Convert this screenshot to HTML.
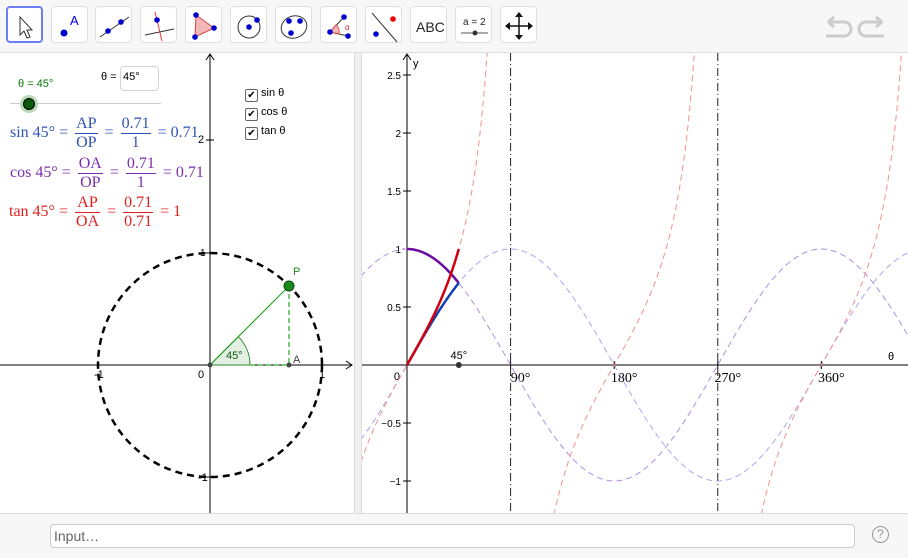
<!DOCTYPE html>
<html><head><meta charset="utf-8"><style>
html,body{margin:0;width:908px;height:558px;overflow:hidden}
body{background:#fff;font-family:"Liberation Sans",sans-serif;position:relative}
.tb{position:absolute;left:0;top:0;width:908px;height:53px;background:#f7f7f7;border-bottom:1px solid #ddd;box-sizing:border-box}
.btn{position:absolute;top:6px;width:37px;height:37px;background:#fff;border:1px solid #e0e0e0;border-radius:4px;box-sizing:border-box}
.btn svg{position:absolute;left:0;top:0}
.sel{border:2px solid #6d7ff5}
.ser{font-family:"Liberation Serif",serif;position:absolute;font-size:16px;white-space:nowrap}
.fr{display:inline-block;vertical-align:middle;text-align:center;margin:0 3px}
.fr span{display:block;line-height:18px;padding:0 1px}
.fr span:first-child{border-bottom:1px solid currentColor}
.t{position:absolute;font-size:11px;white-space:nowrap}
.bot{position:absolute;left:0;top:513px;width:908px;height:45px;background:#f7f7f7;border-top:1px solid #ddd;box-sizing:border-box}
</style></head><body>
<div class="tb">
<div class="btn sel" style="left:6px"><svg width="37" height="37"><path d="M12 9 L12 27 L16 23 L19 30 L22 29 L19 22 L24 22 Z" fill="#fff" stroke="#333" stroke-width="1"/></svg></div>
<div class="btn" style="left:51px"><svg width="37" height="37"><circle cx="12" cy="26" r="3.5" fill="#00c"/><text x="18" y="18" font-size="13" fill="#00f" font-family="Liberation Sans">A</text></svg></div>
<div class="btn" style="left:95px"><svg width="37" height="37"><line x1="4" y1="30" x2="33" y2="10" stroke="#333"/><circle cx="12" cy="24" r="2.8" fill="#00c"/><circle cx="25" cy="15" r="2.8" fill="#00c"/></svg></div>
<div class="btn" style="left:140px"><svg width="37" height="37"><line x1="4" y1="28" x2="33" y2="22" stroke="#333"/><line x1="14" y1="5" x2="21" y2="34" stroke="#e33"/><circle cx="16" cy="13" r="2.8" fill="#00c"/></svg></div>
<div class="btn" style="left:185px"><svg width="37" height="37"><path d="M10 8 L28 21 L9 30 Z" fill="#f2b8b8" stroke="#d44"/><circle cx="10" cy="8" r="2.8" fill="#00c"/><circle cx="28" cy="21" r="2.8" fill="#00c"/><circle cx="9" cy="30" r="2.8" fill="#00c"/></svg></div>
<div class="btn" style="left:230px"><svg width="37" height="37"><circle cx="18" cy="20" r="11" fill="none" stroke="#333"/><circle cx="18" cy="20" r="2.8" fill="#00c"/><circle cx="26" cy="13" r="2.8" fill="#00c"/></svg></div>
<div class="btn" style="left:275px"><svg width="37" height="37"><ellipse cx="18" cy="20" rx="13" ry="11" fill="none" stroke="#333" transform="rotate(-20 18 20)"/><circle cx="13" cy="14" r="2.8" fill="#00c"/><circle cx="24" cy="14" r="2.8" fill="#00c"/><circle cx="15" cy="26" r="2.8" fill="#00c"/></svg></div>
<div class="btn" style="left:320px"><svg width="37" height="37"><path d="M9 25 L23 10 M9 25 L27 29" stroke="#333" fill="none"/><path d="M9 25 L15 18 A9 9 0 0 1 18 27 Z" fill="#f2b8b8" stroke="#d44"/><circle cx="9" cy="25" r="2.8" fill="#00c"/><circle cx="23" cy="10" r="2.8" fill="#00c"/><circle cx="27" cy="29" r="2.8" fill="#00c"/><text x="24" y="23" font-size="8" fill="#d22">α</text></svg></div>
<div class="btn" style="left:365px"><svg width="37" height="37"><line x1="6" y1="6" x2="31" y2="35" stroke="#333"/><circle cx="10" cy="27" r="2.8" fill="#00c"/><circle cx="27" cy="12" r="2.8" fill="#e00"/></svg></div>
<div class="btn" style="left:410px"><svg width="37" height="37"><text x="5" y="25" font-size="14" fill="#222" font-family="Liberation Sans">ABC</text></svg></div>
<div class="btn" style="left:455px"><svg width="37" height="37"><text x="7" y="18" font-size="10" fill="#222" font-family="Liberation Sans">a = 2</text><line x1="5" y1="26" x2="32" y2="26" stroke="#555"/><circle cx="19" cy="26" r="2.5" fill="#333"/></svg></div>
<div class="btn" style="left:500px"><svg width="37" height="37"><path d="M18 7 V31 M6 19 H30" stroke="#111" stroke-width="1.5"/><path d="M18 5 L14 10 H22Z M18 33 L14 28 H22Z M4 19 L9 15 V23Z M32 19 L27 15 V23Z" fill="#111"/></svg></div>
<svg style="position:absolute;left:820px;top:12px" width="70" height="30"><path d="M8 10 H24 A7 7 0 0 1 24 24 H6 M8 10 L14 5 M8 10 L14 15" stroke="#ccc" stroke-width="3" fill="none"/><path d="M62 10 H46 A7 7 0 0 0 46 24 H64 M62 10 L56 5 M62 10 L56 15" stroke="#ccc" stroke-width="3" fill="none"/></svg>
</div>

<svg id="L" style="position:absolute;left:0;top:53px" width="354" height="460">
<g transform="translate(0,-53)">
<line x1="0" y1="365" x2="352" y2="365" stroke="#000"/><path d="M346 361 L352 365 L346 369" fill="none" stroke="#000"/>
<line x1="210" y1="513" x2="210" y2="55" stroke="#000"/><path d="M206 60 L210 54 L214 60" fill="none" stroke="#000"/>
<line x1="322" y1="361" x2="322" y2="369" stroke="#000"/><line x1="98" y1="361" x2="98" y2="369" stroke="#000"/>
<line x1="206" y1="253" x2="214" y2="253" stroke="#000"/><line x1="206" y1="477" x2="214" y2="477" stroke="#000"/><line x1="206" y1="140" x2="214" y2="140" stroke="#000"/>
<text x="198" y="143" font-size="11">2</text><text x="200" y="256" font-size="10">1</text><text x="94" y="378" font-size="11">-1</text><text x="198" y="378" font-size="11">0</text><text x="319" y="378" font-size="11">1</text><text x="198" y="481" font-size="11">-1</text>
<circle cx="210" cy="365" r="112" fill="none" stroke="#000" stroke-width="2.5" stroke-dasharray="7,5"/>
<path d="M210 365 L250 365 A40 40 0 0 0 238.3 336.7 Z" fill="#e3efe3" stroke="#2a8a2a"/>
<line x1="210" y1="365" x2="289" y2="286" stroke="#1a9a1a"/>
<line x1="289" y1="286" x2="289" y2="365" stroke="#7ad07a" stroke-width="2" stroke-dasharray="5,3"/>
<line x1="250" y1="365" x2="289" y2="365" stroke="#7ad07a" stroke-width="2" stroke-dasharray="5,3"/>
<circle cx="289" cy="286" r="5" fill="#1a8a1a" stroke="#0a4a0a"/>
<circle cx="289" cy="365" r="2.5" fill="#444"/><circle cx="210" cy="365" r="2.5" fill="#444"/>
<text x="226" y="359" font-size="11" fill="#0a5a0a">45°</text>
<text x="293" y="275" font-size="11" fill="#1a8a1a">P</text><text x="293" y="363" font-size="11" fill="#444">A</text>
</g></svg>

<div class="t" style="left:18px;top:78px;color:#0a7a0a">θ = 45°</div>
<div style="position:absolute;left:10px;top:103px;width:151px;height:1px;background:#ccc"></div>
<div style="position:absolute;left:20px;top:95px;width:18px;height:18px;border-radius:50%;background:#b9d9b9"></div>
<div style="position:absolute;left:23px;top:98px;width:12px;height:12px;border-radius:50%;background:#0a5a0a;box-sizing:border-box;border:1px solid #000"></div>
<div class="t" style="left:101px;top:71px">θ =</div>
<div style="position:absolute;left:120px;top:66px;width:39px;height:25px;border:1px solid #d4d4d4;border-radius:4px;box-sizing:border-box;font-size:11px;padding:4px 2px;background:#fff">45°</div>

<div class="ser" style="left:10px;top:115px;color:#2f52b8">sin 45° = <span class="fr"><span>AP</span><span>OP</span></span> = <span class="fr"><span>0.71</span><span>1</span></span> = 0.71</div>
<div class="ser" style="left:10px;top:155px;color:#7b2fb0">cos 45° = <span class="fr"><span>OA</span><span>OP</span></span> = <span class="fr"><span>0.71</span><span>1</span></span> = 0.71</div>
<div class="ser" style="left:9px;top:194px;color:#e02020">tan 45° = <span class="fr"><span>AP</span><span>OA</span></span> = <span class="fr"><span>0.71</span><span>0.71</span></span> = 1</div>

<div style="position:absolute;left:245px;top:84px;font-size:11px;line-height:19px">
<div><span style="display:inline-block;width:11px;height:11px;border:1.5px solid #666;border-radius:2px;vertical-align:-2px;font-size:10px;line-height:11px;text-align:center">✔</span> sin θ</div>
<div><span style="display:inline-block;width:11px;height:11px;border:1.5px solid #666;border-radius:2px;vertical-align:-2px;font-size:10px;line-height:11px;text-align:center">✔</span> cos θ</div>
<div><span style="display:inline-block;width:11px;height:11px;border:1.5px solid #666;border-radius:2px;vertical-align:-2px;font-size:10px;line-height:11px;text-align:center">✔</span> tan θ</div>
</div>

<div style="position:absolute;left:354px;top:53px;width:8px;height:460px;background:#f0f0f0;border-left:1px solid #ddd;border-right:1px solid #ddd;box-sizing:border-box"></div>

<svg id="R" style="position:absolute;left:362px;top:53px" width="546" height="460">
<g id="G" transform="translate(-362,-53)">
<line x1="362" y1="365" x2="908" y2="365" stroke="#000"/>
<line x1="407" y1="513" x2="407" y2="55" stroke="#000"/><path d="M403 60 L407 54 L411 60" fill="none" stroke="#000"/>
<text x="413" y="67" font-size="11">y</text><text x="888" y="360" font-size="11">θ</text>
<text x="400" y="380" font-size="11" text-anchor="end">0</text>
</g></svg>

<div class="bot">
<div style="position:absolute;left:50px;top:10px;width:805px;height:24px;background:#fff;border:1px solid #ccc;border-radius:4px;box-sizing:border-box;font-size:14px;color:#666;padding:3px 3px">Input…</div>
<div style="position:absolute;left:872px;top:12px;width:17px;height:17px;border:1.5px solid #999;border-radius:50%;box-sizing:border-box;font-size:12px;color:#999;text-align:center;line-height:15px">?</div>
</div>

<script>
var g=document.getElementById('G'),NS='http://www.w3.org/2000/svg';
function el(t,a,txt){var e=document.createElementNS(NS,t);for(var k in a)e.setAttribute(k,a[k]);if(txt)e.textContent=txt;g.appendChild(e);return e;}
var ox=407,oy=365,sx=1.151,sy=116;
function X(d){return ox+d*sx}function Y(v){return oy-v*sy}
function path(f,a,b){var d='',pen=false;for(var t=a;t<=b;t+=0.5){var v=f(t);if(!isFinite(v)||Math.abs(v)>4){pen=false;continue;}d+=(pen?'L':'M')+X(t).toFixed(1)+' '+Y(v).toFixed(1);pen=true;}return d;}
var r=Math.PI/180;
[-0.5,-1,0.5,1,1.5,2,2.5].forEach(function(v){el('line',{x1:403,y1:Y(v),x2:411,y2:Y(v),stroke:'#000'});el('text',{x:401,y:Y(v)+4,'font-size':10,'text-anchor':'end'},String(v).replace('-','−'));});
[90,180,270,360].forEach(function(d){el('line',{x1:X(d),y1:361,x2:X(d),y2:369,stroke:'#000'});el('text',{x:X(d)+10,y:382,'font-size':14,'text-anchor':'middle','font-family':'Liberation Serif'},d+'°');});
[90,270].forEach(function(d){el('line',{x1:X(d),y1:53,x2:X(d),y2:513,stroke:'#222','stroke-dasharray':'8,3,1,3'});});
el('path',{d:path(function(t){return Math.sin(t*r)},-40,440),fill:'none',stroke:'#a8a8ee','stroke-dasharray':'6,4'});
el('path',{d:path(function(t){return Math.cos(t*r)},-40,440),fill:'none',stroke:'#b08ee0','stroke-dasharray':'6,4'});
el('path',{d:path(function(t){return Math.tan(t*r)},-40,440),fill:'none',stroke:'#f29090','stroke-dasharray':'6,4'});
el('path',{d:path(function(t){return Math.cos(t*r)},0,45),fill:'none',stroke:'#6a0aa0','stroke-width':2.5});
el('path',{d:path(function(t){return Math.sin(t*r)},0,45),fill:'none',stroke:'#1040b0','stroke-width':2.5});
el('path',{d:path(function(t){return Math.tan(t*r)},0,45),fill:'none',stroke:'#d00010','stroke-width':2.5});
el('circle',{cx:X(45),cy:oy,r:3,fill:'#333'});
el('text',{x:X(45),y:359,'font-size':11,'text-anchor':'middle'},'45°');
</script>
</body></html>
